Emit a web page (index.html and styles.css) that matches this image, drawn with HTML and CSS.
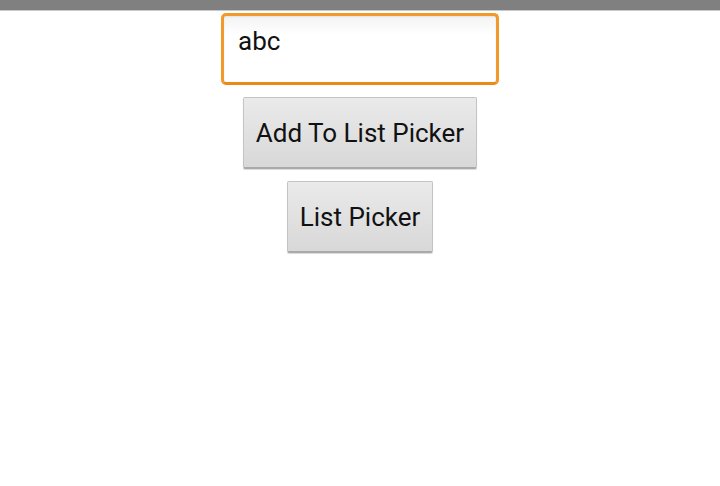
FILE: index.html
```html
<!DOCTYPE html>
<html>
<head>
<meta charset="utf-8">
<link rel="stylesheet" href="styles.css">
</head>
<body>
<div class="statusbar"></div>
<main class="screen">
  <div class="field"><span class="field-text">abc</span></div>
  <button class="btn btn-add">Add To List Picker</button>
  <button class="btn btn-pick">List Picker</button>
</main>
</body>
</html>
```
FILE: styles.css
```css
html, body {
  margin: 0;
  padding: 0;
  background: #ffffff;
  width: 720px;
  height: 486px;
  overflow: hidden;
  font-family: Roboto, "Noto Sans", sans-serif;
}
.statusbar {
  height: 10px;
  background: #808080;
  border-bottom: 1px solid #c8c8c8;
}
.screen {
  display: flex;
  flex-direction: column;
  align-items: center;
  padding-top: 2px;
}
.field {
  box-sizing: border-box;
  width: 278px;
  height: 72px;
  border: 3px solid #f3982a;
  border-bottom-color: #ec8a18;
  border-radius: 5px;
  background: linear-gradient(#f4f4f4, #ffffff 30%);
  padding: 8px 0 0 14px;
  box-shadow: inset 0 1px 2px rgba(0,0,0,0.08);
}
.field-text {
  font-size: 26px;
  color: #111;
  line-height: 34px;
}
.btn {
  box-sizing: border-box;
  height: 72px;
  margin-top: 12px;
  border: 1px solid #c4c4c4;
  border-bottom: 2px solid #a9a9a9;
  border-radius: 2px;
  background: linear-gradient(#eaeaea, #d8d8d8);
  font-family: Roboto, "Noto Sans", sans-serif;
  font-size: 26px;
  color: #111;
  padding: 1px 0 0 0;
  box-shadow: 0 1px 1px rgba(0,0,0,0.15);
}
.btn-add { width: 234px; }
.btn-pick { width: 146px; margin-top: 12px; }
```
